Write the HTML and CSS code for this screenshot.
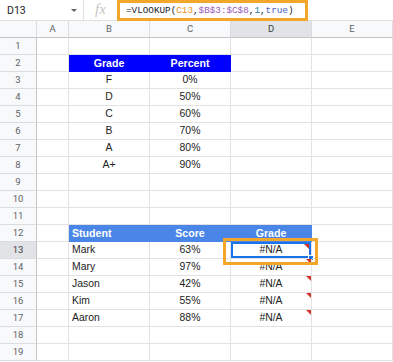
FILE: index.html
```html
<!DOCTYPE html>
<html lang="en">
<head>
    <meta charset="UTF-8">
    <meta name="viewport" content="width=device-width, initial-scale=1.0">
    <title>VLOOKUP grades</title>
    <link rel="stylesheet" href="styles.css">
</head>
<body>
    <div class="formula-bar">
        <div class="name-box">
            <span>D13</span>
            <span class="caret"></span>
        </div>
        <div class="fx">fx</div>
        <div class="formula"><span class="op">=VLOOKUP(</span><span class="ref1">C13</span><span class="op">,</span><span class="ref2">$B$3:$C$8</span><span class="op">,</span><span class="num">1</span><span class="op">,</span><span class="bool">true</span><span class="op">)</span></div>
    </div>

    <div class="sheet">
        <div class="row col-head">
            <div class="cell corner"></div>
            <div class="cell">A</div>
            <div class="cell">B</div>
            <div class="cell">C</div>
            <div class="cell active">D</div>
            <div class="cell">E</div>
        </div>
        <div class="row"><div class="cell num-head">1</div><div class="cell"></div><div class="cell"></div><div class="cell"></div><div class="cell"></div><div class="cell"></div></div>
        <div class="row"><div class="cell num-head">2</div><div class="cell"></div><div class="cell c head-blue">Grade</div><div class="cell c head-blue">Percent</div><div class="cell"></div><div class="cell"></div></div>
        <div class="row"><div class="cell num-head">3</div><div class="cell"></div><div class="cell c">F</div><div class="cell c">0%</div><div class="cell"></div><div class="cell"></div></div>
        <div class="row"><div class="cell num-head">4</div><div class="cell"></div><div class="cell c">D</div><div class="cell c">50%</div><div class="cell"></div><div class="cell"></div></div>
        <div class="row"><div class="cell num-head">5</div><div class="cell"></div><div class="cell c">C</div><div class="cell c">60%</div><div class="cell"></div><div class="cell"></div></div>
        <div class="row"><div class="cell num-head">6</div><div class="cell"></div><div class="cell c">B</div><div class="cell c">70%</div><div class="cell"></div><div class="cell"></div></div>
        <div class="row"><div class="cell num-head">7</div><div class="cell"></div><div class="cell c">A</div><div class="cell c">80%</div><div class="cell"></div><div class="cell"></div></div>
        <div class="row"><div class="cell num-head">8</div><div class="cell"></div><div class="cell c">A+</div><div class="cell c">90%</div><div class="cell"></div><div class="cell"></div></div>
        <div class="row"><div class="cell num-head">9</div><div class="cell"></div><div class="cell"></div><div class="cell"></div><div class="cell"></div><div class="cell"></div></div>
        <div class="row"><div class="cell num-head">10</div><div class="cell"></div><div class="cell"></div><div class="cell"></div><div class="cell"></div><div class="cell"></div></div>
        <div class="row"><div class="cell num-head">11</div><div class="cell"></div><div class="cell"></div><div class="cell"></div><div class="cell"></div><div class="cell"></div></div>
        <div class="row"><div class="cell num-head">12</div><div class="cell"></div><div class="cell head-cf">Student</div><div class="cell c head-cf">Score</div><div class="cell c head-cf">Grade</div><div class="cell"></div></div>
        <div class="row"><div class="cell num-head active">13</div><div class="cell"></div><div class="cell">Mark</div><div class="cell c">63%</div><div class="cell c note selected">#N/A<span class="handle"></span></div><div class="cell"></div></div>
        <div class="row"><div class="cell num-head">14</div><div class="cell"></div><div class="cell">Mary</div><div class="cell c">97%</div><div class="cell c note">#N/A</div><div class="cell"></div></div>
        <div class="row"><div class="cell num-head">15</div><div class="cell"></div><div class="cell">Jason</div><div class="cell c">42%</div><div class="cell c note">#N/A</div><div class="cell"></div></div>
        <div class="row"><div class="cell num-head">16</div><div class="cell"></div><div class="cell">Kim</div><div class="cell c">55%</div><div class="cell c note">#N/A</div><div class="cell"></div></div>
        <div class="row"><div class="cell num-head">17</div><div class="cell"></div><div class="cell">Aaron</div><div class="cell c">88%</div><div class="cell c note">#N/A</div><div class="cell"></div></div>
        <div class="row"><div class="cell num-head">18</div><div class="cell"></div><div class="cell"></div><div class="cell"></div><div class="cell"></div><div class="cell"></div></div>
        <div class="row"><div class="cell num-head">19</div><div class="cell"></div><div class="cell"></div><div class="cell"></div><div class="cell"></div><div class="cell"></div></div>

        <!-- highlight around the selected cell -->
        <div class="callout"></div>
    </div>
</body>
</html>
```

FILE: styles.css
```css
body {
    margin: 0;
    padding: 0;
    background-color: #fff;
    font-family: "Liberation Sans", Arial, sans-serif;
    overflow: hidden;
}
.formula-bar {
    display: flex;
    height: 21px;
    border-bottom: 1px solid #e0e0e0;
    box-sizing: border-box;
    font-family: Roboto, "Liberation Sans", sans-serif;
}
.name-box {
    width: 84px;
    display: flex;
    align-items: center;
    justify-content: space-between;
    padding: 0 6px 0 7px;
    box-sizing: border-box;
    border-right: 1px solid #e0e0e0;
    font-size: 10.5px;
    color: #222;
}
.caret {
    width: 0;
    height: 0;
    border-left: 3px solid transparent;
    border-right: 3px solid transparent;
    border-top: 3px solid #5f6368;
    margin-top: 1px;
}
.fx {
    width: 33px;
    text-align: center;
    font-family: "Liberation Serif", serif;
    font-style: italic;
    font-size: 15px;
    line-height: 19px;
    color: #c4c4c4;
}
.formula {
    width: 191px;
    height: 21px;
    border: 3px solid #f2a72a;
    box-sizing: border-box;
    padding-left: 6px;
    font-family: "Liberation Mono", monospace;
    font-size: 9.3px;
    line-height: 15px;
    white-space: nowrap;
}
.op { color: #222; }
.ref1 { color: #e8901c; }
.ref2 { color: #9a59b5; }
.num { color: #2a7bb0; }
.bool { color: #4b5fba; }

.sheet {
    position: relative;
}
.row {
    display: grid;
    grid-template-columns: 37px 32px 81px 81px 81px 81px;
    height: 17px;
}
.cell {
    position: relative;
    box-sizing: border-box;
    border-right: 1px solid #e2e2e2;
    border-bottom: 1px solid #e2e2e2;
    font-size: 10.4px;
    line-height: 16px;
    color: #222;
    padding: 0 3px;
    white-space: nowrap;
}
.c {
    text-align: center;
}
.col-head .cell {
    background-color: #f8f9fa;
    border-color: #c4c4c4;
    border-right-color: #dadce0;
    text-align: center;
    font-family: Roboto, "Liberation Sans", sans-serif;
    font-size: 9.5px;
    color: #5f6368;
}
.num-head {
    background-color: #f8f9fa;
    border-right-color: #c4c4c4 !important;
    border-bottom-color: #dadce0;
    text-align: center;
    font-family: Roboto, "Liberation Sans", sans-serif;
    font-size: 9.5px;
    color: #5f6368;
}
.col-head .active,
.num-head.active {
    background-color: #e1e3e6;
    color: #3c4043;
}
.head-blue {
    background-color: #0000ff;
    border-color: #0000ff;
    color: #fff;
    font-weight: bold;
    font-size: 10.6px;
}
.head-cf {
    background-color: #4a86e8;
    border-color: #4a86e8;
    color: #fff;
    font-weight: bold;
    font-size: 10.6px;
}
.note::after {
    content: "";
    position: absolute;
    top: 0;
    right: 0;
    border-top: 5px solid #d0352b;
    border-left: 5px solid transparent;
}
.selected {
    box-shadow: inset 0 0 0 2px #1a73e8;
}
.selected::after {
    top: 2px;
    right: 2px;
}
.handle {
    position: absolute;
    right: -3px;
    bottom: -3px;
    width: 6px;
    height: 6px;
    background-color: #1a73e8;
    border: 1px solid #fff;
    box-sizing: border-box;
}
.callout {
    position: absolute;
    left: 223px;
    top: 217px;
    width: 95px;
    height: 27px;
    border: 3px solid #f2a72a;
    box-sizing: border-box;
}
```
